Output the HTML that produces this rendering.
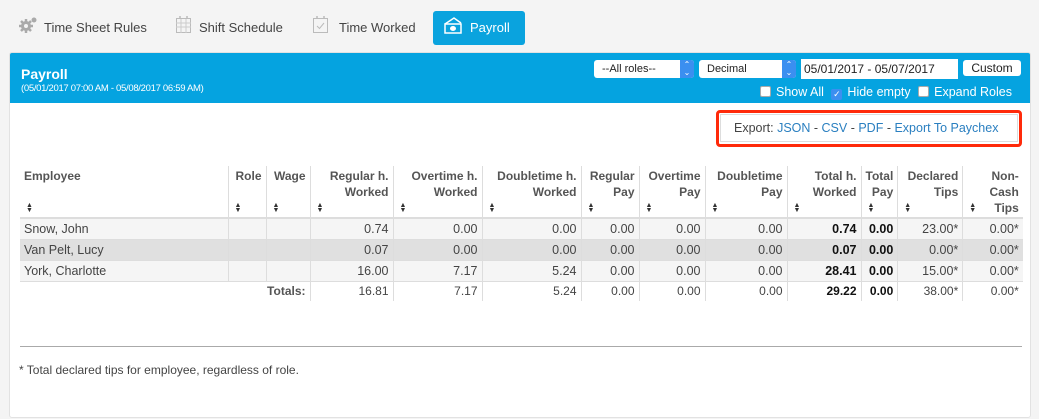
<!DOCTYPE html>
<html><head><meta charset="utf-8"><style>
*{box-sizing:border-box;margin:0;padding:0}
body{width:1039px;height:419px;background:#f4f4f4;font-family:"Liberation Sans",Arial,sans-serif;position:relative;overflow:hidden;color:#333}
.abs{position:absolute}
.tab{position:absolute;top:20px;font-size:13px;color:#444}
.panel{position:absolute;left:9px;top:52px;width:1022px;height:366px;background:#fff;border:1px solid #e2e2e2;border-radius:3px;overflow:hidden}
.hdr{position:absolute;left:0;top:0;width:100%;height:50px;background:#05a3e0}
.sel{position:absolute;top:7px;height:18px;background:#fff;border-radius:3px;font-size:11px;color:#222;padding:3px 0 0 8px}
.sel i{position:absolute;right:0;top:0;width:14px;height:18px;background:#3b8ff0;border-radius:0 3px 3px 0;color:#fff;font-style:normal;font-size:8px;text-align:center;line-height:8px;padding-top:1px}
.cb{display:inline-block;width:11px;height:11px;background:#fff;border-radius:2px;vertical-align:-1px;margin-right:5px;border:1px solid #aaa;font-size:9px;line-height:9px;text-align:center;color:#fff}
table{position:absolute;left:10px;top:113px;border-collapse:collapse;font-size:12.5px}
th{font-size:12px;color:#555;font-weight:bold;vertical-align:top;text-align:right;padding:2px 4px 0 4px;border-left:1px solid #ddd;border-bottom:2px solid #ddd;height:52px;position:relative;line-height:16px}
th:first-child{border-left:none;text-align:left}
th .s{position:absolute;left:6px;bottom:4px;font-size:7px;line-height:5px;color:#333;text-align:center}
td{height:21px;text-align:right;padding:0 4px;border-left:1px solid #ddd;border-bottom:1px solid #ddd;color:#444}
td:first-child{text-align:left;border-left:none}
tr.a td{background:#f5f5f5}tr.b td{background:#e0e0e0}
tr.t td{background:#fff;border-bottom:none;font-size:12px;height:20px}
b{color:#111}
</style></head><body>
<svg class="abs" style="left:18px;top:16px" width="20" height="18" viewBox="0 0 20 18"><g stroke="#aaa" stroke-width="2.5"><line x1="8" y1="3" x2="8" y2="17"/><line x1="1" y1="10" x2="15" y2="10"/><line x1="3" y1="5" x2="13" y2="15"/><line x1="13" y1="5" x2="3" y2="15"/></g><circle cx="8" cy="10" r="5" fill="#aaa"/><circle cx="8" cy="10" r="2" fill="#f4f4f4"/><circle cx="16" cy="4" r="2.5" fill="#aaa"/></svg>
<div class="tab" style="left:44px">Time Sheet Rules</div>
<svg class="abs" style="left:176px;top:16px" width="15" height="17" viewBox="0 0 15 17"><rect x="0.5" y="2.5" width="14" height="14" fill="none" stroke="#bbb"/><g stroke="#ccc"><line x1="0" y1="7" x2="15" y2="7"/><line x1="0" y1="11" x2="15" y2="11"/><line x1="5" y1="3" x2="5" y2="17"/><line x1="10" y1="3" x2="10" y2="17"/></g><line x1="4" y1="0" x2="4" y2="3" stroke="#bbb" stroke-width="1.5"/><line x1="11" y1="0" x2="11" y2="3" stroke="#bbb" stroke-width="1.5"/></svg>
<div class="tab" style="left:199px">Shift Schedule</div>
<svg class="abs" style="left:313px;top:16px" width="15" height="17" viewBox="0 0 15 17"><rect x="0.5" y="2.5" width="14" height="14" fill="none" stroke="#bbb"/><path d="M4 10l2.5 2.5L11 7" fill="none" stroke="#bbb"/><line x1="4" y1="0" x2="4" y2="3" stroke="#bbb" stroke-width="1.5"/><line x1="11" y1="0" x2="11" y2="3" stroke="#bbb" stroke-width="1.5"/></svg>
<div class="tab" style="left:339px">Time Worked</div>
<div class="abs" style="left:433px;top:11px;width:92px;height:34px;background:#0aa3de;border-radius:3px"></div>
<svg class="abs" style="left:443px;top:16px" width="20" height="20" viewBox="0 0 20 20"><path d="M2 8L11 2l7 5" fill="none" stroke="#fff" stroke-width="1.5"/><rect x="2" y="8" width="16" height="9" fill="none" stroke="#fff" stroke-width="1.5"/><ellipse cx="10" cy="12.5" rx="3" ry="2.5" fill="#fff"/></svg>
<div class="tab" style="left:470px;color:#fff">Payroll</div>
<div class="panel">
<div class="hdr">
<div class="abs" style="left:11px;top:13px;color:#fff;font-weight:bold;font-size:14px">Payroll</div>
<div class="abs" style="left:11px;top:30px;color:#fff;font-size:9.5px;letter-spacing:-0.3px">(05/01/2017 07:00 AM - 05/08/2017 06:59 AM)</div>
<div class="sel" style="left:584px;width:100px">--All roles--<i>⌃<br>⌄</i></div>
<div class="sel" style="left:689px;width:97px">Decimal<i>⌃<br>⌄</i></div>
<div class="sel" style="left:791px;width:157px;border-radius:0;top:6px;height:20px;font-size:12px;padding:3px 0 0 3px">05/01/2017 - 05/07/2017</div>
<div class="sel" style="left:953px;width:58px;height:16px;font-size:12px;padding:1px 0 0 0;text-align:center">Custom</div>
<div class="abs" style="left:750px;top:32px;color:#fff;font-size:12.5px;white-space:nowrap"><span class="cb"></span>Show All <span class="cb" style="background:#3b8ff0;border-color:#3b8ff0;margin-left:4px">✓</span>Hide empty <span class="cb" style="margin-left:4px"></span>Expand Roles</div>
</div>
<div class="abs" style="left:706px;top:57px;width:306px;height:37px;border:3px solid #ff2a0a;border-radius:4px"></div>
<div class="abs" style="left:710px;top:61px;width:298px;height:28px;border:1px solid #ddd;font-size:12.5px;color:#444;padding:6px 0 0 13px">Export: <span style="color:#2a7fc0">JSON</span> - <span style="color:#2a7fc0">CSV</span> - <span style="color:#2a7fc0">PDF</span> - <span style="color:#2a7fc0">Export To Paychex</span></div>
<table>
<tr><th style="width:208px">Employee<span class="s">▲<br>▼</span></th><th style="width:38px">Role<span class="s">▲<br>▼</span></th><th style="width:44px">Wage<span class="s">▲<br>▼</span></th><th style="width:83px">Regular h.<br>Worked<span class="s">▲<br>▼</span></th><th style="width:89px">Overtime h.<br>Worked<span class="s">▲<br>▼</span></th><th style="width:99px">Doubletime h.<br>Worked<span class="s">▲<br>▼</span></th><th style="width:58px">Regular<br>Pay<span class="s">▲<br>▼</span></th><th style="width:66px">Overtime<br>Pay<span class="s">▲<br>▼</span></th><th style="width:82px">Doubletime<br>Pay<span class="s">▲<br>▼</span></th><th style="width:74px">Total h.<br>Worked<span class="s">▲<br>▼</span></th><th style="width:35px">Total<br>Pay<span class="s">▲<br>▼</span></th><th style="width:65px">Declared<br>Tips<span class="s">▲<br>▼</span></th><th style="width:60px">Non-<br>Cash<br>Tips<span class="s">▲<br>▼</span></th></tr>
<tr class="a"><td>Snow, John</td><td></td><td></td><td>0.74</td><td>0.00</td><td>0.00</td><td>0.00</td><td>0.00</td><td>0.00</td><td><b>0.74</b></td><td><b>0.00</b></td><td>23.00*</td><td>0.00*</td></tr>
<tr class="b"><td>Van Pelt, Lucy</td><td></td><td></td><td>0.07</td><td>0.00</td><td>0.00</td><td>0.00</td><td>0.00</td><td>0.00</td><td><b>0.07</b></td><td><b>0.00</b></td><td>0.00*</td><td>0.00*</td></tr>
<tr class="a"><td>York, Charlotte</td><td></td><td></td><td>16.00</td><td>7.17</td><td>5.24</td><td>0.00</td><td>0.00</td><td>0.00</td><td><b>28.41</b></td><td><b>0.00</b></td><td>15.00*</td><td>0.00*</td></tr>
<tr class="t"><td colspan="3" style="text-align:right;border-top:1px solid #ddd"><b style="color:#555">Totals:</b></td><td>16.81</td><td>7.17</td><td>5.24</td><td>0.00</td><td>0.00</td><td>0.00</td><td><b>29.22</b></td><td><b>0.00</b></td><td>38.00*</td><td>0.00*</td></tr>
</table>
<div class="abs" style="left:10px;top:293px;width:1002px;height:1px;background:#aaa"></div>
<div class="abs" style="left:9px;top:310px;font-size:12px;color:#444">* Total declared tips for employee, regardless of role.</div>
</div>
</body></html>
